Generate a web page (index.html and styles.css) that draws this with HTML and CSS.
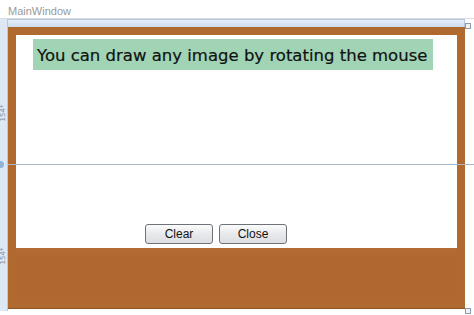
FILE: index.html
```html
<!DOCTYPE html>
<html>
<head>
  <title>MainWindow</title>
  <link rel="stylesheet" href="styles.css">
</head>
<body>
  <div class="title">MainWindow</div>

  <div class="stage">
    <div class="rail">
      <span class="ruler ruler-top">154*</span>
      <span class="ruler ruler-bottom">154*</span>
    </div>

    <div class="design">
      <div class="band"></div>
      <div class="window">
        <div class="client">
          <div class="label">You can draw any image by rotating the mouse</div>
          <div class="buttons">
            <button class="btn">Clear</button>
            <button class="btn">Close</button>
          </div>
        </div>
        <div class="footer"></div>
      </div>
    </div>
  </div>

  <div class="guide"></div>
  <div class="guide-dot"></div>
  <div class="grip grip-top"></div>
  <div class="grip grip-bottom"></div>
</body>
</html>
```

FILE: styles.css
```css
body {
  margin: 0;
  width: 474px;
  height: 315px;
  background-color: #fff;
  font-family: 'DejaVu Sans', sans-serif;
  position: relative;
  overflow: hidden;
}

.title {
  height: 18px;
  padding-left: 8px;
  font-family: 'Liberation Sans', sans-serif;
  font-size: 11px;
  line-height: 22px;
  color: #9a9a9a;
  border-bottom: 1px solid #d8dde4;
}

.stage {
  display: flex;
}

.rail {
  width: 7px;
  height: 292px;
  background-color: #dde8f4;
  border-right: 1px solid #b9c9db;
  position: relative;
}

.ruler {
  position: absolute;
  left: -5px;
  font-size: 7px;
  color: #8090a4;
  transform: rotate(-90deg);
  white-space: nowrap;
}

.ruler-top {
  top: 90px;
}

.ruler-bottom {
  top: 233px;
}

.design {
  width: 457px;
}

.band {
  height: 7px;
  background: linear-gradient(#e6eef8, #cdddef);
  border-top: 1px solid #b5c7dc;
  border-right: 1px solid #b5c7dc;
}

.window {
  background-color: #b0692f;
  padding: 8px 8px 0 8px;
  border-bottom: 1px solid #8e5426;
}

.client {
  background-color: #fff;
  height: 213px;
  padding: 4px 0 0 17px;
  box-sizing: border-box;
}

.label {
  width: 400px;
  height: 31px;
  background-color: #a0d4b4;
  color: #111;
  font-family: 'DejaVu Sans', sans-serif;
  font-size: 16.5px;
  line-height: 33px;
  padding-left: 4px;
  box-sizing: border-box;
  white-space: nowrap;
  -webkit-text-stroke: 0.2px #111;
}

.buttons {
  display: flex;
  gap: 6px;
  margin: 154px 0 0 112px;
}

.btn {
  width: 68px;
  height: 20px;
  padding: 0;
  font-family: 'Liberation Sans', sans-serif;
  font-size: 12px;
  color: #111;
  background: linear-gradient(#fbfbfb, #e8e9eb 50%, #dcdee2);
  border: 1px solid #6f7379;
  border-radius: 3px;
}

.footer {
  height: 60px;
  background: linear-gradient(#b46c31, #ae6830 20%, #b06a30);
}

.guide {
  position: absolute;
  left: 8px;
  right: 0;
  top: 164px;
  height: 1px;
  background-color: #a9b6c6;
}

.guide-dot {
  position: absolute;
  left: -3px;
  top: 161px;
  width: 7px;
  height: 7px;
  border-radius: 50%;
  background-color: #8fb3da;
}

.grip {
  position: absolute;
  left: 465px;
  width: 4px;
  height: 4px;
  border: 1px solid #8d9bab;
  background-color: #eef2f7;
}

.grip-top {
  top: 23px;
}

.grip-bottom {
  top: 308px;
}
```
